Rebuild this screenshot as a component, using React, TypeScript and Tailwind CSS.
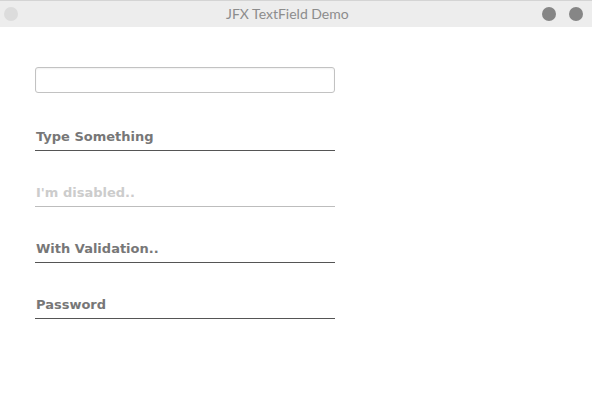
export default function App() {
    const fields = [
        { label: "Type Something", disabled: false },
        { label: "I'm disabled..", disabled: true },
        { label: "With Validation..", disabled: false },
        { label: "Password", disabled: false },
    ];

    return (
        <div className="h-[405px] w-[592px] overflow-hidden bg-white">
            {/* window title bar */}
            <div className="relative flex h-[27px] items-center border-t border-[#d4d4d4] bg-[#ededed]">
                <div className="ml-[4px] h-[14px] w-[14px] rounded-full bg-[#dcdcdc]" />
                <div className="flex-1 pl-[208px] font-['Lato',sans-serif] text-[14px] leading-[16px] text-[#8c8c8c]">
                    JFX TextField Demo
                </div>
                <div className="mr-[9px] flex gap-[13px]">
                    <div className="h-[14px] w-[14px] rounded-full bg-[#868686]" />
                    <div className="h-[14px] w-[14px] rounded-full bg-[#868686]" />
                </div>
            </div>

            <div className="pl-[35px] pt-[40px] font-['DejaVu_Sans',sans-serif]">
                <input
                    type="text"
                    className="block h-[26px] w-[300px] rounded-[3px] border border-[#c2c2c2] bg-white shadow-[inset_0_1px_2px_rgba(0,0,0,0.06)] outline-none"
                />

                <div className="mt-[31px] flex flex-col gap-[29px]">
                    {fields.map((f) => (
                        <div
                            key={f.label}
                            className={
                                f.disabled
                                    ? "flex h-[27px] w-[300px] items-end border-b border-[#bdbdbd] pb-[6px] pl-[1px]"
                                    : "flex h-[27px] w-[300px] items-end border-b border-[#555555] pb-[6px] pl-[1px]"
                            }
                        >
                            <span
                                className={
                                    f.disabled
                                        ? "text-[13px] font-bold leading-[15px] text-[#cccccc]"
                                        : "text-[13px] font-bold leading-[15px] text-[#777777]"
                                }
                            >
                                {f.label}
                            </span>
                        </div>
                    ))}
                </div>
            </div>
        </div>
    );
}
